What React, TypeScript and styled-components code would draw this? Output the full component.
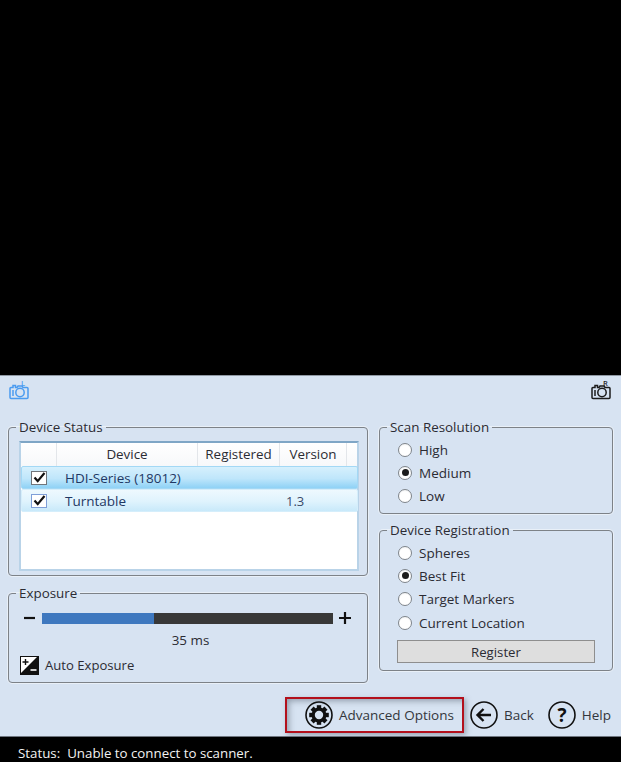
import React, {FC} from "react";
import styled, {createGlobalStyle} from "styled-components";

const GlobalStyle = createGlobalStyle`
  html, body {
    margin: 0;
    padding: 0;
    background: #000;
  }
  body {
    font-family: "Open Sans", "Noto Sans", sans-serif;
    color: #2b2b33;
  }
`

const Screen = styled.div`
  width: 621px;
  height: 762px;
  display: flex;
  flex-direction: column;
  background: #000;
`

const Viewport = styled.div`
  height: 375px;
  background: #000;
`

const Panel = styled.div`
  height: 362px;
  box-sizing: border-box;
  background: #d7e3f2;
  border-top: 1px solid #8f98a3;
  border-bottom: 1px solid #6f7680;
  display: flex;
  flex-direction: column;
`

const CameraRow = styled.div`
  height: 32px;
  padding: 1px 10px 0 9px;
  box-sizing: border-box;
  display: flex;
  justify-content: space-between;
  align-items: flex-start;
`

const Columns = styled.div`
  display: grid;
  grid-template-columns: 360px 234px;
  column-gap: 11px;
  padding: 11px 8px 0 8px;
`

const Column = styled.div<{$gap: number}>`
  display: flex;
  flex-direction: column;
  gap: ${p => p.$gap}px;
`

const Group = styled.fieldset<{$height: number}>`
  margin: 0;
  min-width: 0;
  height: ${p => p.$height}px;
  box-sizing: border-box;
  border: 1px solid #7d8288;
  border-radius: 4px;
  padding: 0;
  box-shadow: 0 0 0 1px rgba(255, 255, 255, 0.45);
`

const Legend = styled.legend`
  margin-left: 7px;
  padding: 0 3px;
  font-size: 13.4px;
  line-height: 16px;
  color: #2b2b33;
`

const DeviceList = styled.div`
  margin: 6px 8px 0 10px;
  height: 130px;
  box-sizing: border-box;
  background: #fff;
  border: 2px solid #b9d3e8;
  border-top-color: #7fa6c6;
  display: flex;
  flex-direction: column;
`

const HeaderRow = styled.div`
  height: 23px;
  flex: none;
  display: grid;
  grid-template-columns: 36px 141px 82px 67px 1fr;
  background: linear-gradient(#ffffff, #f7f8fa);
`

const HeaderCell = styled.div`
  font-size: 13.4px;
  line-height: 23px;
  text-align: center;
  color: #2b2b33;
  border-right: 1px solid #e3e6ea;
`

const DeviceRow = styled.div<{$selected?: boolean}>`
  height: 23px;
  flex: none;
  box-sizing: border-box;
  margin: 0 -1px 0 0;
  display: grid;
  grid-template-columns: 34px 230px 1fr;
  align-items: center;
  border-radius: 2px;
  color: #1f3864;
  font-size: 13.5px;
  background: ${p => p.$selected
    ? "linear-gradient(#d6f0fd, #bfe6fb 55%, #8fd2f6)"
    : "linear-gradient(#eef9fe, #dff3fd 55%, #c8e9fa)"};
  border: 1px solid ${p => p.$selected ? "#a3d8f5" : "#d5eefb"};
`

const CheckCell = styled.div`
  display: flex;
  justify-content: center;
`

const CheckBox = styled.span<{$focused?: boolean}>`
  width: 16px;
  height: 14px;
  box-sizing: border-box;
  background: #fff;
  border: 1px solid ${p => p.$focused ? "#7f9fd8" : "#70757b"};
  display: flex;
  align-items: center;
  justify-content: center;
  color: #111;
`

const DeviceName = styled.span`
  padding-left: 9px;
`

const VersionCell = styled.span`
  color: #3a4a6a;
  font-size: 13px;
`

const SliderRow = styled.div`
  display: flex;
  align-items: center;
  margin: 7px 0 0 15px;
  height: 20px;
`

const Track = styled.div`
  width: 291px;
  height: 11px;
  margin: 0 6px 0 6px;
  background: #383838;
`

const TrackFill = styled.div`
  height: 100%;
  background: #3e78bf;
`

const Reading = styled.div`
  font-size: 13.4px;
  line-height: 18px;
  text-align: center;
  margin: 3px 0 0 0;
  padding-left: 5px;
`

const AutoRow = styled.div`
  display: flex;
  align-items: center;
  gap: 6px;
  margin: 7px 0 0 11px;
  font-size: 13.1px;
  line-height: 19px;
`

const RadioList = styled.div`
  display: flex;
  flex-direction: column;
  gap: 4px;
  margin: 5px 0 0 18px;
`

const RadioRow = styled.label`
  display: flex;
  align-items: center;
  gap: 7px;
  height: 19.3px;
  font-size: 13.5px;
`

const RadioDot = styled.span<{$on?: boolean}>`
  width: 14px;
  height: 14px;
  border-radius: 50%;
  box-sizing: border-box;
  border: 1px solid #7f858b;
  background: radial-gradient(circle at 50% 60%, #ffffff 55%, #e4e6e9);
  display: flex;
  align-items: center;
  justify-content: center;
  &::after {
    content: "";
    display: ${p => p.$on ? "block" : "none"};
    width: 7px;
    height: 7px;
    border-radius: 50%;
    background: #1c1c1c;
  }
`

const RegisterButton = styled.button`
  display: block;
  width: 198px;
  height: 23px;
  margin: 8px 0 0 17px;
  padding: 0;
  background: #dedede;
  border: 1px solid #8e8e8e;
  font: inherit;
  font-size: 13.2px;
  color: #2b2b33;
`

const ActionBar = styled.div`
  flex: 1;
  display: flex;
  justify-content: flex-end;
  align-items: flex-start;
  padding: 14px 10px 0 0;
`

const ActionButton = styled.div<{$highlight?: boolean; $space?: number}>`
  display: flex;
  align-items: center;
  gap: 6px;
  height: 36px;
  box-sizing: border-box;
  margin-left: ${p => p.$space || 0}px;
  font-size: 13.5px;
  color: #33363b;
  ${p => p.$highlight && `
    width: 179px;
    margin-right: 6px;
    padding-left: 18px;
    border: 2px solid #b3101c;
    box-shadow: inset 5px 5px 6px -3px rgba(90, 100, 115, 0.55), 2px 2px 5px rgba(90, 100, 115, 0.5);
  `}
`

const StatusBar = styled.div`
  flex: 1;
  display: flex;
  align-items: center;
  gap: 7px;
  padding: 7px 0 0 18px;
  background: #000;
  color: #f2f2f2;
  font-size: 13.3px;
`

const Camera: FC<{letter: string; color: string}> = ({letter, color}) => (
  <svg width="20" height="23" viewBox="0 -3 20 23" fill="none" stroke={color} strokeWidth="1.5">
    <path d="M1 8.5a1 1 0 0 1 1-1h2V5.5h2.5v2H8l1-1.5h4l1 1.5h4a1 1 0 0 1 1 1v9a1 1 0 0 1-1 1H2a1 1 0 0 1-1-1z" />
    <circle cx="11" cy="12.5" r="4.2" />
    <path d="M4 10v6" />
    <text x="12" y="6" fontSize="7.5" stroke="none" fill={color} fontFamily="Open Sans, sans-serif" fontWeight="600">{letter}</text>
  </svg>
)

const Tick: FC = () => (
  <svg width="13" height="11" viewBox="0 0 13 11" fill="none" stroke="currentColor" strokeWidth="2.2">
    <path d="M1.5 5.5l3.2 3.6L11.5 1" />
  </svg>
)

const RoundIcon: FC<{children: React.ReactNode}> = ({children}) => (
  <svg width="28" height="28" viewBox="0 0 28 28" fill="none" stroke="#111">
    <circle cx="14" cy="14" r="13" strokeWidth="1.6" />
    {children}
  </svg>
)

const Gear: FC = () => {
  const teeth = [0, 45, 90, 135, 180, 225, 270, 315]
  return (
    <RoundIcon>
      {teeth.map(a => (
        <rect key={a} x="11.8" y="4.2" width="4.4" height="4" fill="#111" stroke="none" transform={`rotate(${a} 14 14)`} />
      ))}
      <circle cx="14" cy="14" r="5.8" strokeWidth="3.2" />
    </RoundIcon>
  )
}

const ExposureIcon: FC = () => (
  <svg width="19" height="19" viewBox="0 0 19 19">
    <rect width="19" height="19" fill="#111" />
    <path d="M1 1h16L1 17z" fill="#fff" />
    <path d="M5.5 3v6M2.5 6h6" stroke="#111" strokeWidth="1.4" />
    <path d="M10.5 14h6" stroke="#fff" strokeWidth="1.6" />
  </svg>
)

const Radio: FC<{label: string; on?: boolean}> = ({label, on}) => (
  <RadioRow>
    <RadioDot $on={on} />
    {label}
  </RadioRow>
)

const App: FC = () => {
  const exposure = 38.5

  return (
    <Screen>
      <GlobalStyle />
      <Viewport />
      <Panel>
        <CameraRow>
          <Camera letter="L" color="#4a9bf0" />
          <Camera letter="R" color="#1c1c1c" />
        </CameraRow>
        <Columns>
          <Column $gap={9}>
            <Group $height={157}>
              <Legend>Device Status</Legend>
              <DeviceList>
                <HeaderRow>
                  <HeaderCell />
                  <HeaderCell>Device</HeaderCell>
                  <HeaderCell>Registered</HeaderCell>
                  <HeaderCell>Version</HeaderCell>
                </HeaderRow>
                <DeviceRow $selected>
                  <CheckCell><CheckBox><Tick /></CheckBox></CheckCell>
                  <DeviceName>HDI-Series (18012)</DeviceName>
                </DeviceRow>
                <DeviceRow>
                  <CheckCell><CheckBox $focused><Tick /></CheckBox></CheckCell>
                  <DeviceName>Turntable</DeviceName>
                  <VersionCell>1.3</VersionCell>
                </DeviceRow>
              </DeviceList>
            </Group>
            <Group $height={98}>
              <Legend>Exposure</Legend>
              <SliderRow>
                <svg width="12" height="12" viewBox="0 0 12 12"><path d="M0 6h11" stroke="#111" strokeWidth="2.2" /></svg>
                <Track><TrackFill style={{width: `${exposure}%`}} /></Track>
                <svg width="12" height="12" viewBox="0 0 12 12"><path d="M0 6h12M6 0v12" stroke="#111" strokeWidth="2.2" /></svg>
              </SliderRow>
              <Reading>35 ms</Reading>
              <AutoRow>
                <ExposureIcon />
                Auto Exposure
              </AutoRow>
            </Group>
          </Column>
          <Column $gap={8}>
            <Group $height={95}>
              <Legend>Scan Resolution</Legend>
              <RadioList>
                <Radio label="High" />
                <Radio label="Medium" on />
                <Radio label="Low" />
              </RadioList>
            </Group>
            <Group $height={149}>
              <Legend>Device Registration</Legend>
              <RadioList>
                <Radio label="Spheres" />
                <Radio label="Best Fit" on />
                <Radio label="Target Markers" />
                <Radio label="Current Location" />
              </RadioList>
              <RegisterButton>Register</RegisterButton>
            </Group>
          </Column>
        </Columns>
        <ActionBar>
          <ActionButton $highlight>
            <Gear />
            Advanced Options
          </ActionButton>
          <ActionButton>
            <RoundIcon>
              <path d="M21 14H8M13.5 8l-6 6 6 6" strokeWidth="2.4" />
            </RoundIcon>
            Back
          </ActionButton>
          <ActionButton $space={14}>
            <RoundIcon>
              <text x="14" y="20.5" textAnchor="middle" fontSize="19" fontWeight="700" fill="#111" stroke="none" fontFamily="Open Sans, sans-serif">?</text>
            </RoundIcon>
            Help
          </ActionButton>
        </ActionBar>
      </Panel>
      <StatusBar>
        <span>Status:</span>
        <span>Unable to connect to scanner.</span>
      </StatusBar>
    </Screen>
  )
}

export default App;
